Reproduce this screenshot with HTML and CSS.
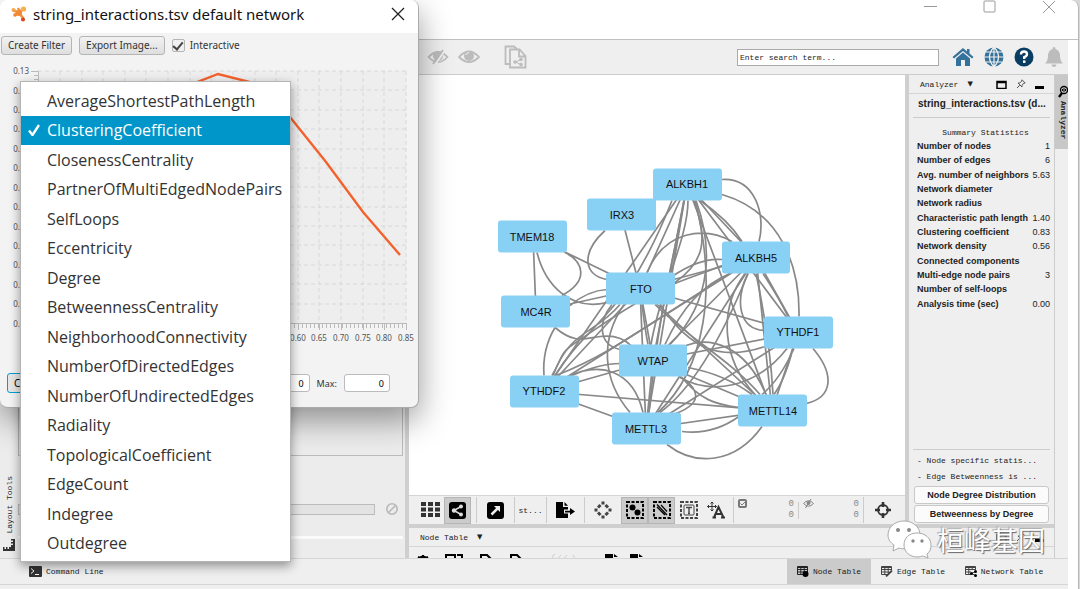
FILE: index.html
```html
<!DOCTYPE html>
<html lang="en">
<head>
  <meta charset="UTF-8" />
  <meta name="viewport" content="width=device-width, initial-scale=1.0"/>
  <title>Cytoscape Session</title>
  <link rel="stylesheet" href="styles.css">
</head>
<body>

<div class="window">

  <!-- Window title bar -->
  <header class="titlebar">
    <button aria-label="Minimize"><svg width="14" height="14"><path d="M0 6.500h13" class="thin"/></svg></button>
    <button aria-label="Maximize"><svg width="14" height="14"><rect x="1" y="1" width="11" height="11" rx="1" class="thin"/></svg></button>
    <button aria-label="Close"><svg width="14" height="14"><path d="M1 1l12 12M13 1L1 13" class="thin"/></svg></button>
  </header>

  <!-- Main toolbar -->
  <div class="toolbar">
    <div class="tool-left">
      <button aria-label="Hide selected"><svg width="22" height="18" viewBox="0 0 22 18"><path d="M1.500 9Q11-1 20.500 9Q11 19 1.500 9Z" fill="none" stroke="#bcbcbc" stroke-width="1.800"/><circle cx="11" cy="8" r="5" fill="#bcbcbc"/><path d="M8 17L18 2" stroke="#efefef" stroke-width="2"/><path d="M6 16L16 2" stroke="#bcbcbc" stroke-width="1.800"/></svg></button>
      <button aria-label="Show all"><svg width="22" height="18" viewBox="0 0 22 18"><path d="M1 9Q11-2 21 9Q11 19 1 9Z" fill="none" stroke="#bcbcbc" stroke-width="1.800"/><circle cx="11" cy="8" r="5" fill="#bcbcbc"/><path d="M8 7a3 3 0 0 1 3-2.500" stroke="#efefef" fill="none"/></svg></button>
      <button class="docs" aria-label="New network"><svg width="23" height="24" viewBox="0 0 23 24"><path d="M6 19H1.500V1.500H10L13 4M6 4.500H15.500L21.500 11V22.500H6ZM15 5V11.500H21" fill="none" stroke="#bcbcbc" stroke-width="1.800"/><path d="M17 14.500L11.500 17L17 19.500" fill="none" stroke="#bcbcbc"/><circle cx="17" cy="14.500" r="1.800" fill="#bcbcbc"/><circle cx="11" cy="17" r="1.800" fill="#bcbcbc"/><circle cx="17" cy="19.500" r="1.800" fill="#bcbcbc"/></svg></button>
    </div>
    <input class="search" type="text" aria-label="Search" placeholder="Enter search term...">
    <div class="tool-right">
      <button aria-label="Home"><svg width="22" height="20" viewBox="0 0 22 20"><path d="M11 1L0.500 10L2 11.500L11 4L20 11.500L21.500 10L17.500 6.500V2H15V4.500Z" fill="#34729b"/><path d="M11 5.500L4 11.500V19H9V13H13V19H18V11.500Z" fill="#34729b"/></svg></button>
      <button aria-label="Web"><svg width="20" height="20" viewBox="0 0 20 20"><circle cx="10" cy="10" r="9.500" fill="#34729b"/><path d="M10 0V20M0 10H20M2 5H18M2 15H18M10 0Q1 10 10 20Q19 10 10 0" fill="none" stroke="#efefef" stroke-width="1.200"/></svg></button>
      <button aria-label="Help"><svg width="20" height="20" viewBox="0 0 20 20"><circle cx="10" cy="10" r="9.500" fill="#0a3d62"/><path d="M7 7.500Q7 4.500 10 4.500Q13 4.500 13 7.300Q13 9 10.200 10.200V12" fill="none" stroke="#fff" stroke-width="2.400"/><rect x="9" y="13.400" width="2.500" height="2.500" fill="#fff"/></svg></button>
      <button aria-label="Notifications"><svg width="20" height="20" viewBox="0 0 20 20"><path d="M10 0Q11.500 0 11.500 2Q16 3.500 16 9Q16 14 19 16.500H1Q4 14 4 9Q4 3.500 8.500 2Q8.500 0 10 0ZM7.500 17.500H12.500Q12 20 10 20Q8 20 7.500 17.500Z" fill="#bcbcbc"/></svg></button>
    </div>
  </div>

  <div class="workspace">

    <!-- Control panel, mostly behind the chart dialog -->
    <aside class="control">
      <div class="side-tab">
        <span>Layout Tools</span>
        <svg width="12" height="12" viewBox="0 0 12 12"><path d="M12 0V12H0V8H1.500V10H3V8H4.500V10H6V8H8V6H10V4.500H8V3H10V1.500H8V0Z" fill="#333"/></svg>
      </div>
      <div class="control-body">
        <div class="control-box"></div>
        <div class="progress-row">
          <div class="progress"></div>
          <button aria-label="Cancel"><svg width="14" height="14" viewBox="0 0 14 14"><circle cx="7" cy="7" r="5.200" fill="none" stroke="#b9b9b9" stroke-width="1.600"/><path d="M3.500 10.500L10.500 3.500" stroke="#b9b9b9" stroke-width="1.600"/></svg></button>
        </div>
      </div>
    </aside>

    <div class="stack">
      <div class="upper">
        <section class="network">
          <!-- Network view -->
          <svg class="graph" viewBox="409 75 496 421" preserveAspectRatio="xMidYMid slice">
            <g class="edges">
              <path d="M533 237L536 312M533 237L640 289M537 253C545 285 570 312 607 303M565 253C583 262 590 281 562 296"/>
              <path d="M621 215L640 289M605 231C580 254 584 276 607 280"/>
              <path d="M570 306Q588 291 607 290M536 312L640 289M555 328Q542 350 544 376M555 328C575 345 585 339 600 337S625 340 631 346"/>
              <path d="M687 185L756 258M687 185L640 289M687 185L653 361M687 185L646 429M687 185L772 411M687 185L798 333M687 185L544 392"/>
              <path d="M756 258L640 289M756 258L653 361M756 258L646 429M756 258L772 411M756 258L798 333M756 258L544 392"/>
              <path d="M640 289L653 361M640 289L646 429M640 289L772 411M640 289L798 333M640 289L544 392"/>
              <path d="M653 361L646 429M653 361L772 411M653 361L798 333M653 361L544 392"/>
              <path d="M646 429L772 411M646 429L798 333M646 429L544 392M772 411L798 333M772 411L544 392"/>
              <path d="M722 180C755 178 766 215 759 242M722 195C780 212 800 265 799 317M700 201Q728 220 742 242"/>
              <path d="M732 242C705 227 665 230 647 273M694 201C708 240 705 262 675 283M696 201C712 245 714 300 670 345"/>
              <path d="M695 201C718 290 705 370 658 413M688 201C688 240 660 290 651 345M684 201C676 250 660 300 649 413"/>
              <path d="M722 260Q700 258 672 277M722 266C690 280 670 280 610 320S570 345 552 376"/>
              <path d="M748 274C735 300 738 330 765 331M745 274C718 310 722 360 755 395M756 274Q770 340 773 395M763 274Q780 300 788 317"/>
              <path d="M730 274Q690 290 665 345M748 274Q705 380 660 413"/>
              <path d="M624 305C600 340 602 380 630 413M612 305C598 322 598 345 620 350"/>
              <path d="M553 376C570 330 595 335 620 305M555 376C590 320 625 320 672 201M556 376C610 355 640 330 730 274"/>
              <path d="M568 377C600 362 633 370 643 413M572 376Q600 364 620 364"/>
              <path d="M660 305C690 350 720 362 765 347M655 305C690 340 730 360 760 395M642 305Q645 330 648 345"/>
              <path d="M686 346C710 337 745 345 766 395M688 368Q725 375 752 395"/>
              <path d="M680 377C700 390 705 405 670 416M682 378C700 400 715 405 739 408M680 378C710 395 755 390 787 349"/>
              <path d="M813 349C835 375 833 398 806 404M793 349Q785 380 774 395M794 349Q780 380 762 395"/>
              <path d="M682 432Q712 436 739 417M667 445C695 467 735 465 762 427"/>
            </g>
            <g class="nodes">
              <rect x="498" y="221" width="69" height="32" rx="3"/>
              <rect x="587" y="199" width="69" height="32" rx="3"/>
              <rect x="653" y="169" width="69" height="32" rx="3"/>
              <rect x="722" y="242" width="68" height="32" rx="3"/>
              <rect x="606" y="273" width="69" height="32" rx="3"/>
              <rect x="501" y="296" width="69" height="32" rx="3"/>
              <rect x="764" y="317" width="69" height="32" rx="3"/>
              <rect x="619" y="345" width="68" height="32" rx="3"/>
              <rect x="510" y="376" width="69" height="32" rx="3"/>
              <rect x="738" y="395" width="69" height="32" rx="3"/>
              <rect x="612" y="413" width="69" height="32" rx="3"/>
            </g>
            <g class="labels">
              <text x="532" y="241">TMEM18</text>
              <text x="622" y="219">IRX3</text>
              <text x="687" y="188">ALKBH1</text>
              <text x="756" y="262">ALKBH5</text>
              <text x="641" y="293">FTO</text>
              <text x="536" y="316">MC4R</text>
              <text x="798" y="336">YTHDF1</text>
              <text x="653" y="365">WTAP</text>
              <text x="544" y="395">YTHDF2</text>
              <text x="773" y="415">METTL14</text>
              <text x="646" y="433">METTL3</text>
            </g>
          </svg>

          <!-- View toolbar -->
          <div class="viewbar">
            <button class="cell first" aria-label="Grid"><svg width="20" height="16" viewBox="0 0 20 16" fill="#333"><path d="M0 0h5v4H0zM7 0h5v4H7zM14 0h5v4h-5zM0 5.500h5v4H0zM7 5.500h5v4H7zM14 5.500h5v4h-5zM0 11h5v4H0zM7 11h5v4H7zM14 11h5v4h-5z"/></svg></button>
            <button class="cell on" aria-label="Network"><svg width="17" height="17" viewBox="0 0 17 17"><rect width="17" height="17" rx="3"/><path d="M12 4.500L5 8.500L12 12.500" fill="none" stroke="#ddd" stroke-width="1.500"/><circle cx="12" cy="4.500" r="2" fill="#ddd"/><circle cx="5" cy="8.500" r="2.200" fill="#ddd"/><circle cx="12" cy="12.500" r="2" fill="#ddd"/></svg></button>
            <i class="sep gap"></i>
            <button class="cell wide" aria-label="Detach"><svg width="17" height="17" viewBox="0 0 17 17"><rect width="17" height="17" rx="3"/><path d="M4.500 12.500L11 6" stroke="#eee" stroke-width="2.500"/><path d="M7 4H13V10Z" fill="#eee"/></svg></button>
            <i class="sep"></i>
            <span class="netname">st...</span>
            <i class="sep"></i>
            <button class="cell wide" aria-label="Export"><svg width="19" height="18" viewBox="0 0 19 18"><path d="M0 1H7V6H12V8.500H8V12.500H12V17H0Z"/><path d="M8.500 1L12 4.800H8.500Z"/><path d="M9 9.800H14V7L19 10.500L14 14V11.500H9Z"/></svg></button>
            <i class="sep"></i>
            <button class="cell fit" aria-label="Fit"><svg width="18" height="18" viewBox="0 0 18 18" fill="none" stroke="#444" stroke-width="3"><path d="M9 .500V3.500M9 14.500V17.500M.500 9H3.500M14.500 9H17.500M4 6.500L6.500 4M11.500 4L14 6.500M4 11.500L6.500 14M11.500 14L14 11.500"/></svg></button>
            <button class="cell on" aria-label="Select nodes"><svg width="18" height="18" viewBox="0 0 18 18"><rect x="1" y="1" width="16" height="16" fill="none" stroke="#000" stroke-width="2" stroke-dasharray="3 1.500"/><circle cx="6.500" cy="6.500" r="3"/><circle cx="11.500" cy="11.500" r="3"/></svg></button>
            <button class="cell on" aria-label="Select edges"><svg width="18" height="18" viewBox="0 0 18 18" fill="none" stroke="#000"><rect x="1" y="1" width="16" height="16" stroke-width="2" stroke-dasharray="3 1.500"/><path d="M4 6L12 14M4 3.500L14 14M8 4L14 10.500" stroke-width="1.300"/></svg></button>
            <button class="cell" aria-label="Select annotations"><svg width="18" height="18" viewBox="0 0 18 18" fill="none" stroke="#444"><rect x="1" y="1" width="16" height="16" stroke-width="2" stroke-dasharray="3 1.500"/><rect x="4" y="4" width="10" height="10" rx="1"/><path d="M6 6.500H12M9 6.500V12.500M8 12.500H10" stroke-width="1.400"/></svg></button>
            <button class="cell" aria-label="Move labels"><svg width="18" height="18" viewBox="0 0 18 18" fill="none" stroke="#333"><path d="M5 1V10M.500 5.500H9.500M3.500 2.500L5 1L6.500 2.500M3.500 8.500L5 10L6.500 8.500M2 4L.500 5.500L2 7M8 4L9.500 5.500L8 7"/><path d="M7 16.500L11.500 6L16.500 16.500M9 13H14.500M5.500 16.500H9M14 16.500H18" stroke-width="2"/></svg></button>
            <i class="sep after"></i>
            <div class="counter">
              <svg width="9" height="9" viewBox="0 0 9 9"><rect x="1" y="1" width="7" height="7" rx="1" fill="none" stroke="#777" stroke-width="2"/><path d="M2.500 4.500L4 6L7 3" fill="none" stroke="#777"/></svg>
              <span>0<br>0</span>
            </div>
            <i class="sep short"></i>
            <div class="counter">
              <svg width="11" height="9" viewBox="0 0 11 9"><path d="M.500 4.500Q5.500-1 10.500 4.500Q5.500 10 .500 4.500ZM2.500 9L8 0" fill="none" stroke="#888"/><circle cx="5.500" cy="4" r="2" fill="#888"/></svg>
              <span>0<br>0</span>
            </div>
            <i class="sep"></i>
            <button class="cell wide" aria-label="Center"><svg width="16" height="16" viewBox="0 0 16 16" fill="none" stroke="#333" stroke-width="1.800"><circle cx="8" cy="8" r="5"/><path d="M8 0V5M8 11V16M0 8H5M11 8H16" stroke-width="2.600"/></svg></button>
          </div>
        </section>

        <!-- Analyzer panel -->
        <aside class="analyzer">
          <div class="panel-head">
            <span>Analyzer</span><b>▼</b>
            <svg class="push" width="11" height="9"><path d="M1 1.500H10V8.500H1ZM1 2.500H10" fill="none" stroke="#000" stroke-width="1.500"/></svg>
            <svg width="10" height="10" viewBox="0 0 10 10"><path d="M6 .800L9.200 4L7.500 4.300L6 6.500V8L2 4H3.500L5.500 2.500ZM3.800 6.200L1 9" fill="none" stroke="#555"/></svg>
            <svg width="10" height="9"><path d="M0 7.500H9" stroke="#000" stroke-width="3"/></svg>
          </div>
          <h2>string_interactions.tsv (d...</h2>
          <p class="caption">Summary Statistics</p>
          <table>
            <tr><th>Number of nodes</th><td>1</td></tr>
            <tr><th>Number of edges</th><td>6</td></tr>
            <tr><th>Avg. number of neighbors</th><td>5.63</td></tr>
            <tr><th>Network diameter</th><td></td></tr>
            <tr><th>Network radius</th><td></td></tr>
            <tr><th>Characteristic path length</th><td>1.40</td></tr>
            <tr><th>Clustering coefficient</th><td>0.83</td></tr>
            <tr><th>Network density</th><td>0.56</td></tr>
            <tr><th>Connected components</th><td></td></tr>
            <tr><th>Multi-edge node pairs</th><td>3</td></tr>
            <tr><th>Number of self-loops</th><td></td></tr>
            <tr><th>Analysis time (sec)</th><td>0.00</td></tr>
          </table>
          <div class="notes">
            <p>- Node specific statis...</p>
            <p>- Edge Betweenness is ...</p>
          </div>
          <button class="wide-btn">Node Degree Distribution</button>
          <button class="wide-btn">Betweenness by Degree</button>
        </aside>
      </div>

      <!-- Table panel -->
      <section class="tables">
        <div class="panel-head">
          <span>Node Table</span><b>▼</b>
          <svg class="push" width="11" height="9"><path d="M1 1.500H10V8.500H1ZM1 2.500H10" fill="none" stroke="#000" stroke-width="1.500"/></svg>
          <svg width="10" height="10" viewBox="0 0 10 10"><path d="M6 .800L9.200 4L7.500 4.300L6 6.500V8L2 4H3.500L5.500 2.500ZM3.800 6.200L1 9" fill="none" stroke="#555"/></svg>
          <svg width="10" height="9"><path d="M0 7.500H9" stroke="#000" stroke-width="3"/></svg>
        </div>
        <div class="table-tools">
          <svg width="230" height="16" viewBox="0 0 230 16" fill="none" stroke="#000" stroke-width="2">
            <circle cx="6" cy="9" r="4" stroke-width="3"/><path d="M6 3V5M1 5L3 6M11 5L9 6"/>
            <path d="M29 9V3H38V9M40 3H45V9" stroke-width="2"/>
            <path d="M64 9V3H70L74 7M94 9V3H100L104 7"/>
            <path d="M138 2Q135 3 135 9M141 9Q141 5 144 3M147 9Q147 5 150 3M156 3Q158 5 158 9" stroke="#ccc" stroke-width="1"/>
            <path d="M188 2H196V6H200V16H188ZM213 2H221V6H225V16H213Z" fill="#000" stroke="none"/>
            <path d="M197 2L201 5H197ZM222 2L226 5H222Z" fill="#000" stroke="none"/>
          </svg>
        </div>
      </section>
    </div>

    <div class="right-tabs">
      <button>
        <svg width="10" height="13" viewBox="0 0 10 13" fill="none" stroke="#000"><circle cx="6" cy="5" r="3.500" stroke-width="1.300"/><path d="M4 8L1 12" stroke-width="2.300"/><path d="M4.500 6V4M6 7V3M7.500 6V4"/></svg>
        <span>Analyzer</span>
      </button>
    </div>
  </div>

  <!-- Status bar -->
  <footer class="status">
    <button class="cmd"><svg width="13" height="11" viewBox="0 0 13 11"><rect width="13" height="11" rx="1" fill="#333"/><path d="M2 2.500L5 5L2 7.500M6 8.500H10" fill="none" stroke="#fff"/></svg>Command Line</button>
    <nav>
      <button class="on"><svg width="12" height="11" viewBox="0 0 12 11"><path d="M.500 .500H10.500V8.500H.500ZM.500 3.500H10.500M.500 6H10.500M3.800 1V8.500M7.200 1V8.500M.500 1.500H10.500" fill="none" stroke="#222"/><circle cx="8.500" cy="8" r="3"/></svg>Node Table</button>
      <button><svg width="12" height="11" viewBox="0 0 12 11"><path d="M7 8.500H.500V.500H10.500V4M.500 3.500H10.500M.500 6H8M3.800 1V8.500M7.200 1V7M.500 1.500H10.500" fill="none" stroke="#444"/><path d="M5 10.500L11 4.500" stroke="#444" stroke-width="1.800"/></svg>Edge Table</button>
      <button><svg width="12" height="11" viewBox="0 0 12 11"><path d="M6 8.500H.500V.500H10.500V4M.500 3.500H10.500M.500 6H6M3.800 1V8.500M7.200 1V4M.500 1.500H10.500M10.500 5.500L6.500 7.500L10.500 9.500" fill="none" stroke="#444"/><circle cx="10.500" cy="5.500" r="1.500"/><circle cx="6.500" cy="7.500" r="1.500"/><circle cx="10.500" cy="9.500" r="1.500"/></svg>Network Table</button>
    </nav>
  </footer>
</div>

<!-- Chart dialog -->
<div class="dialog" role="dialog" aria-label="Chart">
  <div class="dialog-title">
    <svg width="16" height="16" viewBox="0 0 16 16"><path d="M2 4L8 7L13 2M8 7L4 9M8 7L12 12V15M9 6L7 2" fill="none" stroke="#f0953c" stroke-width="2.600"/><circle cx="2.500" cy="4" r="2" fill="#f6a54a"/><circle cx="12.500" cy="3" r="2.600" fill="#f5b04d"/><circle cx="4" cy="9" r="1.800" fill="#ef8433"/><circle cx="12" cy="13.500" r="2" fill="#d9481f"/><circle cx="8" cy="7" r="3" fill="#f08a35"/></svg>
    <span>string_interactions.tsv default network</span>
    <button aria-label="Close"><svg width="14" height="14"><path d="M1 1l12 12M13 1L1 13" stroke="#222" stroke-width="1.300"/></svg></button>
  </div>
  <div class="dialog-tools">
    <button class="fx">Create Filter</button>
    <button class="fx">Export Image...</button>
    <label><input type="checkbox" checked>Interactive</label>
  </div>
  <svg class="chart" width="418" height="288" viewBox="0 60 418 288">
    <defs>
      <pattern id="minor" width="4" height="5" patternUnits="userSpaceOnUse" x="38" y="323"><path d="M.500 0V5" stroke="#bbb"/></pattern>
    </defs>
    <rect x="38" y="71" width="368" height="252" fill="#eee"/>
    <path class="grid" d="M60 71V323M82 71V323M103 71V323M125 71V323M146 71V323M168 71V323M190 71V323M211 71V323M233 71V323M255 71V323M276 71V323M298 71V323M319 71V323M341 71V323M363 71V323M384 71V323M406 71V323"/>
    <path class="grid" d="M38 71H406M38 90H406M38 110H406M38 129H406M38 149H406M38 168H406M38 187H406M38 207H406M38 226H406M38 245H406M38 265H406M38 284H406M38 304H406"/>
    <path class="axis" d="M38.500 71V323.500H406.500M31 71.500H38M34 75.500H38M34 79.500H38"/>
    <rect x="38" y="323" width="369" height="5" fill="url(#minor)"/>
    <path class="axis" d="M298.500 323V330M319.500 323V330M341.500 323V330M363.500 323V330M384.500 323V330M406.500 323V330"/>
    <path class="series" d="M145 140L182 88L218 74L254 83L290 117L326 162L363 212L400 255"/>
    <g class="ytick">
      <text x="29" y="74">0.13</text><text x="29" y="94">0.12</text><text x="29" y="113">0.11</text><text x="29" y="132">0.10</text><text x="29" y="152">0.09</text><text x="29" y="171">0.08</text><text x="29" y="191">0.07</text><text x="29" y="210">0.06</text><text x="29" y="230">0.05</text><text x="29" y="249">0.04</text><text x="29" y="268">0.03</text><text x="29" y="288">0.02</text><text x="29" y="307">0.01</text><text x="29" y="327">0.00</text>
    </g>
    <g class="xtick">
      <text x="298" y="341">0.60</text><text x="319" y="341">0.65</text><text x="341" y="341">0.70</text><text x="363" y="341">0.75</text><text x="384" y="341">0.80</text><text x="406" y="341">0.85</text>
    </g>
  </svg>
  <div class="dialog-foot">
    <select aria-label="X axis column"><option>ClusteringCoefficient</option></select>
    <input aria-label="Min" type="text" value="0">
    <label for="max">Max:</label><input id="max" type="text" value="0">
  </div>
</div>

<!-- Open column list -->
<ul class="menu" role="listbox" aria-label="Columns">
  <li role="option">AverageShortestPathLength</li>
  <li role="option" class="selected" aria-selected="true"><svg width="12" height="12" viewBox="0 0 12 12"><path d="M1 6.500L4.500 11L11 1" fill="none" stroke="#fff" stroke-width="2.400"/></svg>ClusteringCoefficient</li>
  <li role="option">ClosenessCentrality</li>
  <li role="option">PartnerOfMultiEdgedNodePairs</li>
  <li role="option">SelfLoops</li>
  <li role="option">Eccentricity</li>
  <li role="option">Degree</li>
  <li role="option">BetweennessCentrality</li>
  <li role="option">NeighborhoodConnectivity</li>
  <li role="option">NumberOfDirectedEdges</li>
  <li role="option">NumberOfUndirectedEdges</li>
  <li role="option">Radiality</li>
  <li role="option">TopologicalCoefficient</li>
  <li role="option">EdgeCount</li>
  <li role="option">Indegree</li>
  <li role="option">Outdegree</li>
</ul>

<!-- Channel watermark -->
<div class="watermark">
  <svg width="46" height="40" viewBox="0 0 46 40" fill="#fff" stroke="#aaa"><path d="M17 1C8 1 1 7 1 15C1 20 4 23 7 25L6 31L12 28C14 29 17 29 20 28C30 27 33 21 33 15C33 7 26 1 17 1Z"/><path d="M30 13C22 13 17 18 17 25C17 32 23 37 30 37C33 37 35 36 36 36L41 38L40 34C43 32 44 29 44 25C44 18 38 13 30 13Z"/><g fill="#888" stroke="none"><circle cx="11" cy="10" r="2"/><circle cx="22" cy="10" r="2"/><circle cx="26" cy="21" r="1.700"/><circle cx="35" cy="21" r="1.700"/></g></svg>
  <span lang="zh-CN">桓峰基因</span>
</div>

</body>
</html>
```
FILE: styles.css
```css
* {
  box-sizing: border-box;
}

body {
  margin: 0;
  height: 100vh;
  overflow: hidden;
  background-color: #d8d8d8;
  font-family: "Liberation Mono", monospace;
  font-size: 8px;
  color: #222;
}

button {
  display: flex;
  align-items: center;
  justify-content: center;
  padding: 0;
  border: none;
  background: none;
  font: inherit;
  color: inherit;
}

svg {
  display: block;
  flex: none;
}

p, h2, ul {
  margin: 0;
}

.window {
  display: flex;
  flex-direction: column;
  height: 100%;
  margin-right: 1px;
  background-color: #fff;
  border-right: 1px solid #b5b5b5;
  border-top-right-radius: 8px;
}

/* Title bar */
.titlebar {
  display: flex;
  justify-content: flex-end;
  align-items: flex-start;
  gap: 45px;
  height: 40px;
  padding-right: 22px;
  border-bottom: 1px solid #c0c0c0;
}

.thin {
  fill: none;
  stroke: #999;
}

/* Main toolbar */
.toolbar {
  display: flex;
  align-items: center;
  height: 35px;
  margin-right: 10px;
  padding-left: 427px;
  background-color: #efefef;
  border-bottom: 1px solid #ccc;
}

.tool-left,
.tool-right {
  display: flex;
  align-items: center;
}

.tool-left {
  flex: 1;
  gap: 9px;
}

.tool-left .docs {
  margin-left: 15px;
}

.search {
  width: 202px;
  height: 17px;
  padding: 0 2px;
  border: 1px solid #aaa;
  background-color: #fff;
  font: inherit;
}

.search::placeholder {
  color: #222;
}

.tool-right {
  gap: 10px;
  padding: 0 4px 0 13px;
}

/* Workspace */
.workspace {
  display: flex;
  flex: 1;
  min-height: 0;
  margin-right: 10px;
  background-color: #efefef;
}

.control {
  display: flex;
  width: 409px;
  background-color: #ececec;
  border-right: 4px solid #cfcfcf;
}

.side-tab {
  display: flex;
  flex-direction: column;
  justify-content: flex-end;
  align-items: center;
  gap: 5px;
  width: 18px;
  padding-bottom: 7px;
}

.side-tab span {
  writing-mode: vertical-rl;
  transform: rotate(180deg);
}

.control-body {
  display: flex;
  flex-direction: column;
  flex: 1;
  margin: 0 2px 19px 0;
  border-bottom: 3px solid #fafafa;
}

.control-box {
  flex: 1;
  border: 1px solid #bbb;
}

.progress-row {
  display: flex;
  align-items: center;
  height: 80px;
  gap: 8px;
  padding: 26px 3px 0 0;
}

.progress {
  flex: 1;
  height: 11px;
  border: 1px solid #bbb;
  background-color: #e3e3e3;
}

.progress-row button {
  width: 17px;
  height: 15px;
}

.stack {
  display: flex;
  flex-direction: column;
  flex: 1;
  min-width: 0;
}

.upper {
  display: flex;
  flex: 1;
  min-height: 0;
}

.network {
  display: flex;
  flex-direction: column;
  flex: 1;
  min-width: 0;
}

.graph {
  flex: 1;
  width: 100%;
  min-height: 0;
  background-color: #fff;
}

.edges {
  fill: none;
  stroke: #888;
  stroke-width: 1.7;
}

.nodes {
  fill: #89d0f5;
}

.labels {
  font-family: "Liberation Sans", Arial, sans-serif;
  font-size: 11px;
  text-anchor: middle;
  fill: #111;
}

/* View toolbar */
.viewbar {
  display: flex;
  align-items: center;
  height: 29px;
  border-top: 1px solid #d5d5d5;
}

.cell {
  width: 27px;
  height: 27px;
}

.cell.first {
  margin-left: 8px;
}

.cell.wide {
  width: 37px;
}

.cell.fit {
  width: 36px;
}

.cell.on {
  background-color: #cbcbcb;
  border: 1px solid #b5b5b5;
}

.sep {
  width: 1px;
  height: 26px;
  background-color: #ccc;
}

.sep.gap {
  margin-left: 5px;
}

.sep.after {
  margin-left: 4px;
}

.sep.short {
  height: 17px;
}

.netname {
  width: 31px;
  text-align: center;
}

.counter {
  display: flex;
  justify-content: space-between;
  width: 64px;
  padding: 0 4px;
  color: #888;
}

.counter span {
  font-size: 9px;
  line-height: 11px;
}

/* Analyzer panel */
.analyzer {
  display: flex;
  flex-direction: column;
  width: 149px;
  border-left: 4px solid #cfcfcf;
}

.panel-head {
  display: flex;
  align-items: center;
  gap: 9px;
  height: 19px;
  padding: 0 9px 0 11px;
  border-bottom: 1px solid #d5d5d5;
}

.panel-head b {
  font-family: "DejaVu Sans", sans-serif;
  font-size: 7px;
}

.panel-head .push {
  margin-left: auto;
}

.analyzer h2 {
  height: 24px;
  margin: 0 4px;
  padding-left: 5px;
  border-bottom: 1px solid #ccc;
  font: bold 10px/20px "Liberation Sans", Arial, sans-serif;
  white-space: nowrap;
}

.caption {
  padding: 9px 0 0 8px;
  line-height: 12px;
  text-align: center;
}

.analyzer table {
  height: 172px;
  margin: 0 4px 0 8px;
  border-collapse: collapse;
  font: 9px/12px "Liberation Sans", Arial, sans-serif;
}

.analyzer th {
  padding: 0;
  text-align: left;
  white-space: nowrap;
}

.analyzer td {
  padding: 0;
  text-align: right;
}

.notes {
  margin: auto 4px 1px;
  padding: 3px 4px 0;
  border-top: 1px solid #ccc;
  line-height: 16px;
}

.wide-btn {
  height: 18px;
  margin: 0 5px 1px;
  border: 1px solid #c8c8c8;
  border-radius: 3px;
  background-color: #fbfbfb;
  font: bold 9px "Liberation Sans", Arial, sans-serif;
}

/* Table panel */
.tables {
  height: 34px;
  border-top: 4px solid #cfcfcf;
  overflow: hidden;
}

.table-tools {
  padding: 5px 0 0 8px;
}

.right-tabs {
  width: 14px;
  border-left: 1px solid #ccc;
}

.right-tabs button {
  flex-direction: column;
  align-items: flex-end;
  gap: 3px;
  width: 100%;
  height: 74px;
  background-color: #c8c8c8;
  font-weight: bold;
}

.right-tabs span {
  writing-mode: vertical-rl;
}

/* Status bar */
.status {
  display: flex;
  justify-content: space-between;
  height: 31px;
  margin-right: 10px;
  padding-bottom: 5px;
  border-top: 1px solid #d5d5d5;
  background-color: #efefef;
}

.status button {
  gap: 4px;
  padding: 0 8px;
  height: 26px;
  border-bottom: 1px solid #d5d5d5;
}

.status nav {
  display: flex;
}

.status .cmd {
  flex: 1;
  justify-content: flex-start;
  padding-left: 29px;
}

.status nav button {
  width: 84px;
}

.status nav button:last-child {
  width: 113px;
  padding-right: 23px;
}

.status .on {
  background-color: #cbcbcb;
}

/* Chart dialog */
.dialog {
  position: absolute;
  top: 0;
  left: 0;
  width: 419px;
  background-color: #f3f3f3;
  border: solid #aaa;
  border-width: 0 1px 1px 0;
  border-radius: 8px;
  box-shadow: 0 12px 32px rgba(0, 0, 0, 0.4);
  font-family: "Noto Sans", "Open Sans", sans-serif;
  font-size: 10px;
  color: #333;
  overflow: hidden;
}

.dialog-title {
  display: flex;
  align-items: center;
  gap: 6px;
  height: 33px;
  padding: 0 13px 5px 11px;
  background-color: #fff;
  font-size: 15px;
  color: #111;
}

.dialog-title button {
  margin-left: auto;
}

.dialog-tools {
  display: flex;
  align-items: center;
  gap: 7px;
  height: 24px;
  padding-left: 1px;
}

.fx {
  height: 19px;
  padding: 0 6px;
  border: 1px solid #b5b5b5;
  border-radius: 3px;
  background: linear-gradient(#f2f2f2, #dedede);
  color: #333;
}

.dialog-tools label {
  display: flex;
  align-items: center;
  gap: 5px;
}

.dialog-tools input {
  appearance: none;
  display: grid;
  place-items: center;
  width: 13px;
  height: 13px;
  margin: 0;
  border: 1px solid #b5b5b5;
  border-radius: 2px;
  background-color: #f0f0f0;
}

.dialog-tools input::after {
  content: "";
  width: 4px;
  height: 8px;
  border: solid #444;
  border-width: 0 2px 2px 0;
  transform: rotate(40deg);
}

.chart {
  margin-top: 3px;
}

.grid {
  fill: none;
  stroke: #d8d8d8;
  stroke-dasharray: 4 3;
}

.axis {
  fill: none;
  stroke: #bbb;
}

.series {
  fill: none;
  stroke: #f3622d;
  stroke-width: 2.4;
}

.ytick,
.xtick {
  font-size: 8px;
  fill: #555;
}

.ytick {
  text-anchor: end;
}

.xtick {
  text-anchor: middle;
}

.dialog-foot {
  display: flex;
  align-items: center;
  gap: 7px;
  height: 59px;
  padding: 11px 28px 0 7px;
}

.dialog-foot select {
  width: 170px;
  height: 20px;
  margin-right: auto;
  padding: 0 2px;
  border: 1px solid #039ed3;
  border-radius: 3px;
  background-color: #e6e6e6;
  font: inherit;
}

.dialog-foot input {
  width: 46px;
  height: 18px;
  padding: 0 5px;
  border: 1px solid #bbb;
  border-radius: 3px;
  font: inherit;
  font-size: 9px;
  text-align: right;
}

.dialog-foot label {
  font-size: 9px;
}

/* Open column list */
.menu {
  position: absolute;
  top: 81px;
  left: 20px;
  display: grid;
  grid-auto-rows: 1fr;
  width: 271px;
  height: 481px;
  padding: 4px 0 3px;
  list-style: none;
  background-color: #fff;
  border: 1px solid #b5b5b5;
  box-shadow: 0 4px 10px rgba(0, 0, 0, 0.4);
  font-family: "Open Sans", "Noto Sans", sans-serif;
  font-size: 16px;
  color: #333;
}

.menu li {
  display: flex;
  align-items: center;
  padding-left: 26px;
}

.menu .selected {
  gap: 7px;
  padding-left: 7px;
  background-color: #0096c9;
  color: #fff;
}

/* Watermark */
.watermark {
  position: absolute;
  right: 35px;
  bottom: 29px;
  display: flex;
  align-items: center;
  gap: 4px;
  font: 27px/40px "Noto Sans CJK SC", sans-serif;
  color: #fff;
  text-shadow: 1px 1px 1px #666, -1px -1px 1px #aaa;
}
```
